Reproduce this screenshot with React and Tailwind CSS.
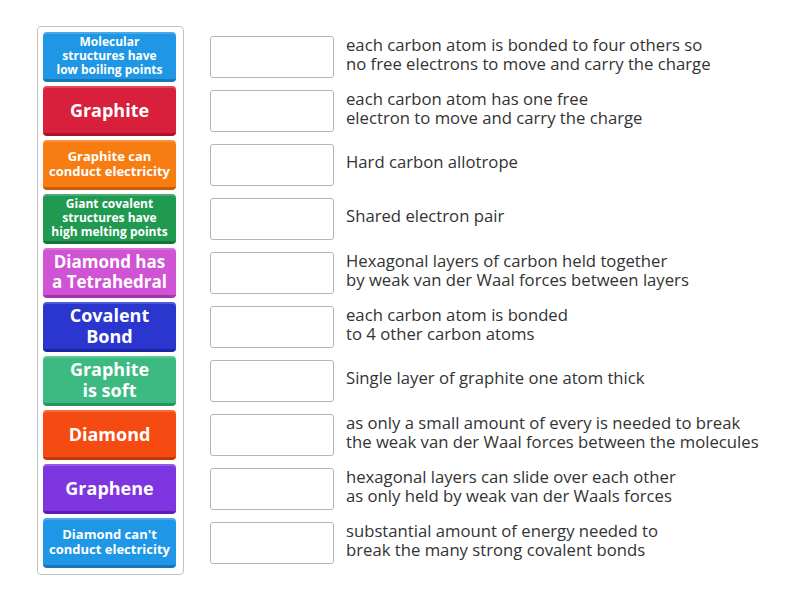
const items = [
  { lines: ["Molecular", "structures have", "low boiling points"], size: "text-[12px] leading-[14px]", bg: "bg-[#1f97e6]", edge: "border-[#1776bb]" },
  { lines: ["Graphite"], size: "text-[18px] leading-[22px]", bg: "bg-[#d81f3b]", edge: "border-[#a8142b]" },
  { lines: ["Graphite can", "conduct electricity"], size: "text-[13px] leading-[15px]", bg: "bg-[#f77d13]", edge: "border-[#c65f08]" },
  { lines: ["Giant covalent", "structures have", "high melting points"], size: "text-[12px] leading-[14px]", bg: "bg-[#209a50]", edge: "border-[#15753b]" },
  { lines: ["Diamond has", "a Tetrahedral"], size: "text-[17px] leading-[20px]", bg: "bg-[#d052d5]", edge: "border-[#a534aa]" },
  { lines: ["Covalent", "Bond"], size: "text-[18px] leading-[21px]", bg: "bg-[#2b36cf]", edge: "border-[#1c25a0]" },
  { lines: ["Graphite", "is soft"], size: "text-[18px] leading-[21px]", bg: "bg-[#3dba82]", edge: "border-[#2a9363]" },
  { lines: ["Diamond"], size: "text-[18px] leading-[22px]", bg: "bg-[#f54b12]", edge: "border-[#c23608]" },
  { lines: ["Graphene"], size: "text-[18px] leading-[22px]", bg: "bg-[#7d36df]", edge: "border-[#5b20b0]" },
  { lines: ["Diamond can't", "conduct electricity"], size: "text-[13px] leading-[15px]", bg: "bg-[#1f97e6]", edge: "border-[#1776bb]" },
];

const answers = [
  ["each carbon atom is bonded to four others so", "no free electrons to move and carry the charge"],
  ["each carbon atom has one free", "electron to move and carry the charge"],
  ["Hard carbon allotrope"],
  ["Shared electron pair"],
  ["Hexagonal layers of carbon held together", "by weak van der Waal forces between layers"],
  ["each carbon atom is bonded", "to 4 other carbon atoms"],
  ["Single layer of graphite one atom thick"],
  ["as only a small amount of every is needed to break", "the weak van der Waal forces between the molecules"],
  ["hexagonal layers can slide over each other", "as only held by weak van der Waals forces"],
  ["substantial amount of energy needed to", "break the many strong covalent bonds"],
];

export default function App() {
  return (
    <div className="w-[800px] h-[600px] bg-white flex font-['Open_Sans',sans-serif]">
      <div className="ml-[37px] mt-[26px] w-[147px] h-[549px] border border-[#c4c4c4] rounded-[4px] px-[5px] pt-[5px] flex flex-col gap-[4px] self-start">
        {items.map((it, i) => (
          <div
            key={i}
            className={`h-[50px] w-[133px] rounded-[4px] border-b-[3px] ${it.bg} ${it.edge} flex flex-col items-center justify-center text-center text-white font-bold whitespace-nowrap ${it.size} shadow-[inset_0_2px_0_rgba(255,255,255,0.18)]`}
          >
            {it.lines.map((l, j) => (
              <div key={j}>{l}</div>
            ))}
          </div>
        ))}
      </div>
      <div className="ml-[26px] mt-[36px] flex flex-col gap-[12px] self-start">
        {answers.map((lines, i) => (
          <div key={i} className="flex items-center h-[42px]">
            <div className="w-[124px] h-[42px] border border-[#b5b5b5] rounded-[3px] bg-white shrink-0" />
            <div className="ml-[12px] -mt-[7px] text-[16.7px] leading-[19px] text-[#333333] whitespace-nowrap">
              {lines.map((l, j) => (
                <div key={j}>{l}</div>
              ))}
            </div>
          </div>
        ))}
      </div>
    </div>
  );
}
